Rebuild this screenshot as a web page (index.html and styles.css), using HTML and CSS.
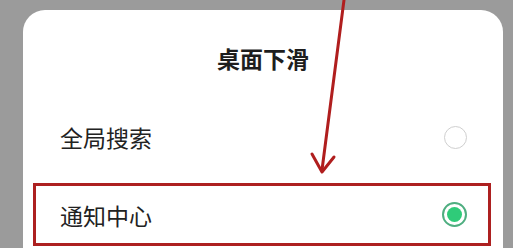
FILE: index.html
```html
<!DOCTYPE html>
<html lang="zh">
<head>
<meta charset="utf-8">
<link rel="stylesheet" href="styles.css">
</head>
<body>
<div class="sheet">
  <div class="title">桌面下滑</div>
  <div class="option">
    <span class="label">全局搜索</span>
    <span class="radio"></span>
  </div>
  <div class="option option-marked">
    <span class="label">通知中心</span>
    <span class="radio radio-on"><span class="dot"></span></span>
  </div>
</div>
<svg class="arrow" width="513" height="248" viewBox="0 0 513 248">
  <line x1="344" y1="0" x2="322" y2="170" stroke="#b01e1e" stroke-width="3" stroke-linecap="round"/>
  <polyline points="312,154 322,172 334,157" fill="none" stroke="#b01e1e" stroke-width="3" stroke-linecap="round" stroke-linejoin="round"/>
</svg>
</body>
</html>
```
FILE: styles.css
```css
html, body {
  margin: 0;
  padding: 0;
  height: 100%;
  overflow: hidden;
}
body {
  background: #9b9b9b;
  font-family: "Noto Sans CJK SC", "Noto Sans", sans-serif;
  color: #222;
  position: relative;
}
.sheet {
  margin: 10px 10px 0 23px;
  height: calc(100% - 10px);
  background: #fff;
  border-radius: 22px 22px 0 0;
  padding-top: 32px;
  box-sizing: border-box;
}
.title {
  text-align: center;
  font-size: 23px;
  font-weight: 600;
  line-height: 32px;
  height: 32px;
  margin-bottom: 35px;
  color: #1e1e1e;
}
.option {
  display: flex;
  align-items: center;
  justify-content: space-between;
  height: 56px;
  padding: 0 36px 0 37px;
  margin-bottom: 18px;
}
.label {
  font-size: 23px;
  line-height: 32px;
  color: #222;
}
.option-marked {
  margin: 0 12px 0 10px;
  height: 63px;
  box-sizing: border-box;
  border: 3px solid #ad2020;
  padding: 0 21px 0 24px;
}
.radio {
  width: 23px;
  height: 23px;
  border-radius: 50%;
  border: 1.5px solid #cfcfcf;
  box-sizing: border-box;
  display: flex;
  align-items: center;
  justify-content: center;
}
.radio-on {
  width: 25px;
  height: 25px;
  border: 2px solid #4fae80;
}
.dot {
  width: 15px;
  height: 15px;
  border-radius: 50%;
  background: #2fcb79;
}
.arrow {
  position: absolute;
  left: 0;
  top: 0;
}
```
